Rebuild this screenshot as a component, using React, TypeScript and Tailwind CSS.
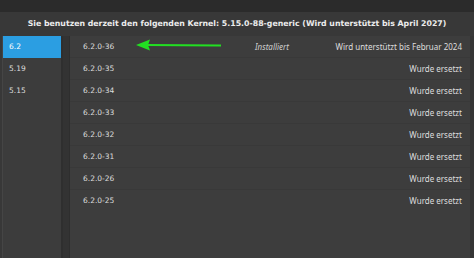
const kernels = [
  { name: '6.2.0-36', status: 'Installiert', support: 'Wird unterstützt bis Februar 2024' },
  { name: '6.2.0-35', status: '', support: 'Wurde ersetzt' },
  { name: '6.2.0-34', status: '', support: 'Wurde ersetzt' },
  { name: '6.2.0-33', status: '', support: 'Wurde ersetzt' },
  { name: '6.2.0-32', status: '', support: 'Wurde ersetzt' },
  { name: '6.2.0-31', status: '', support: 'Wurde ersetzt' },
  { name: '6.2.0-26', status: '', support: 'Wurde ersetzt' },
  { name: '6.2.0-25', status: '', support: 'Wurde ersetzt' },
];

const series = ['6.2', '5.19', '5.15'];

function Arrow() {
  return (
    <svg className="absolute left-[136px] top-[39px]" width="86" height="12" viewBox="0 0 86 12">
      <line x1="10" y1="6" x2="85" y2="6.5" stroke="#22e022" strokeWidth="2" />
      <polygon points="0,6 14,0.5 12,6 14,11.5" fill="#22e022" />
    </svg>
  );
}

export default function App() {
  return (
    <div className="relative w-[474px] h-[258px] bg-[#383838] overflow-hidden text-[#dedede] font-['DejaVu_Sans',sans-serif]">
      <div className="h-[12px] bg-[#2b2b2b]" />
      <div className="h-[24px] flex items-center justify-center text-[7.8px] font-bold text-[#ececec]">
        Sie benutzen derzeit den folgenden Kernel: 5.15.0-88-generic (Wird unterstützt bis April 2027)
      </div>
      <div className="flex h-[222px]">
        <div className="w-[61px] ml-[2px] border-l border-[#454545] border-r-2 border-r-[#2f2f2f] bg-[#3c3c3c] flex flex-col">
          {series.map((s, i) => (
            <div
              key={s}
              className={`h-[22px] flex items-center pl-[6px] text-[7.5px] ${i === 0 ? 'bg-[#2b9ee2] text-white' : ''}`}
            >
              {s}
            </div>
          ))}
        </div>
        <div className="w-[6px] bg-[#333333]" />
        <div className="w-[401px] border-l border-[#2e2e2e] bg-[#3d3d3d] flex flex-col">
          {kernels.map((k) => (
            <div key={k.name} className="h-[22px] flex items-center pl-[13px] pr-[8px] text-[7.5px] border-b border-[#393939] last:border-b-0">
              <span className="w-[172px]">{k.name}</span>
              <span className="w-[50px] italic text-[#cfcfcf] font-['Noto_Sans',sans-serif] text-[8px]">{k.status}</span>
              <span className="ml-auto font-['Noto_Sans',sans-serif] text-[8px]">{k.support}</span>
            </div>
          ))}
        </div>
        <div className="flex-1 bg-[#353535]" />
      </div>
      <Arrow />
    </div>
  );
}
